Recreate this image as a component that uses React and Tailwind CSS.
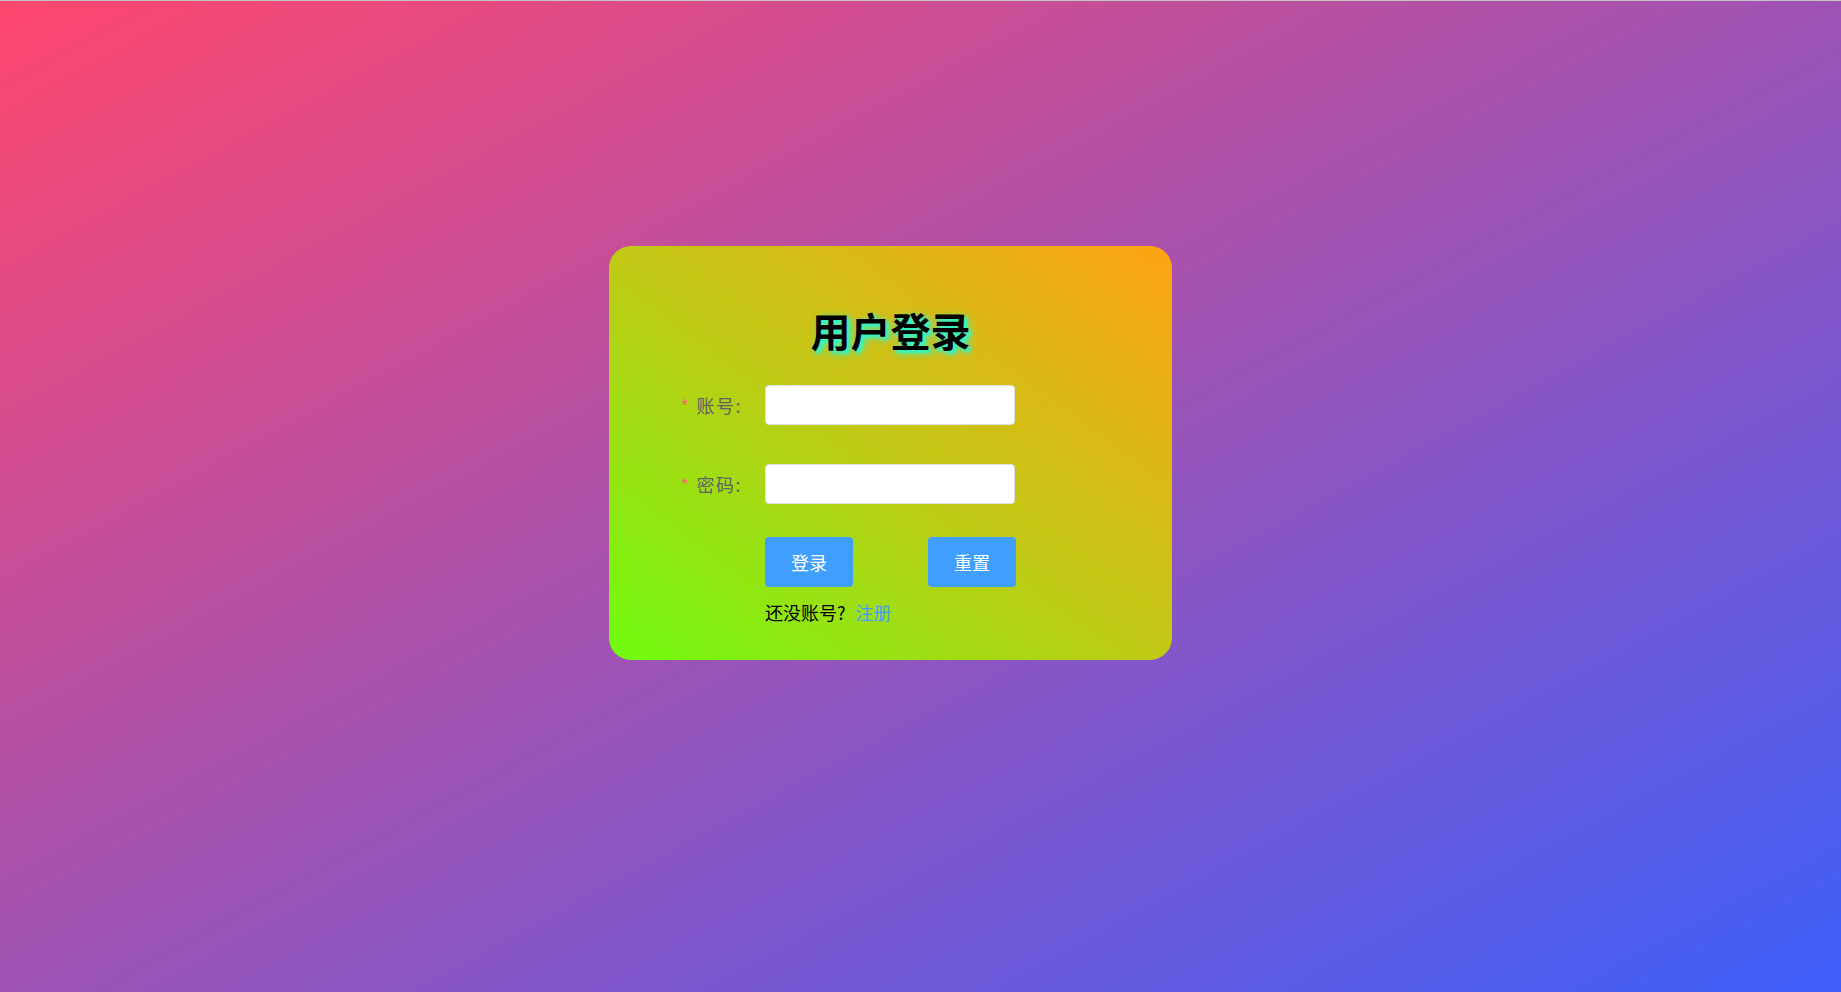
export default function App() {
  const cjk = { fontFamily: '"Noto Sans CJK SC", "Noto Sans", sans-serif' };
  return (
    <div
      className="w-full h-[992px] overflow-hidden bg-[linear-gradient(to_bottom_right,#ff476e,#3d5ffa)] flex flex-col"
      style={cjk}
    >
      <div className="h-px w-full bg-[#c4c4c4] shrink-0" />
      <div className="ml-[609px] mt-[245px] w-[563px] h-[414px] rounded-[22px] bg-[linear-gradient(to_top_right,#6ffc10,#c1c915_50%,#fea312)] flex flex-col">
        <h1 className="mt-[64px] h-[40px] leading-[40px] text-[40px] font-bold text-black text-center [text-shadow:3px_3px_3px_#34f5c4,3px_3px_8px_#34f5c4]">
          用户登录
        </h1>
        <div className="mt-[35px] flex items-center h-[40px]">
          <div className="w-[156px] pr-[23px] text-right text-[18px] leading-[24px] tracking-[1.5px] text-[#606266]">
            <span className="text-[#f56c6c] mr-[6px]">*</span>账号:
          </div>
          <input className="w-[250px] h-[40px] bg-white border border-[#dcdfe6] rounded-[4px] outline-none px-[15px] text-[16px]" />
        </div>
        <div className="mt-[39px] flex items-center h-[40px]">
          <div className="w-[156px] pr-[23px] text-right text-[18px] leading-[24px] tracking-[1.5px] text-[#606266]">
            <span className="text-[#f56c6c] mr-[6px]">*</span>密码:
          </div>
          <input type="password" className="w-[250px] h-[40px] bg-white border border-[#dcdfe6] rounded-[4px] outline-none px-[15px] text-[16px]" />
        </div>
        <div className="mt-[33px] ml-[156px] flex gap-[75px]">
          <button className="w-[88px] h-[50px] rounded-[4px] bg-[#409eff] text-white text-[18px]">登录</button>
          <button className="w-[88px] h-[50px] rounded-[4px] bg-[#409eff] text-white text-[18px]">重置</button>
        </div>
        <div className="mt-[13px] ml-[156px] text-[18px] leading-[24px] text-black">
          还没账号? <span className="text-[#409eff] ml-[6px]">注册</span>
        </div>
      </div>
    </div>
  );
}
